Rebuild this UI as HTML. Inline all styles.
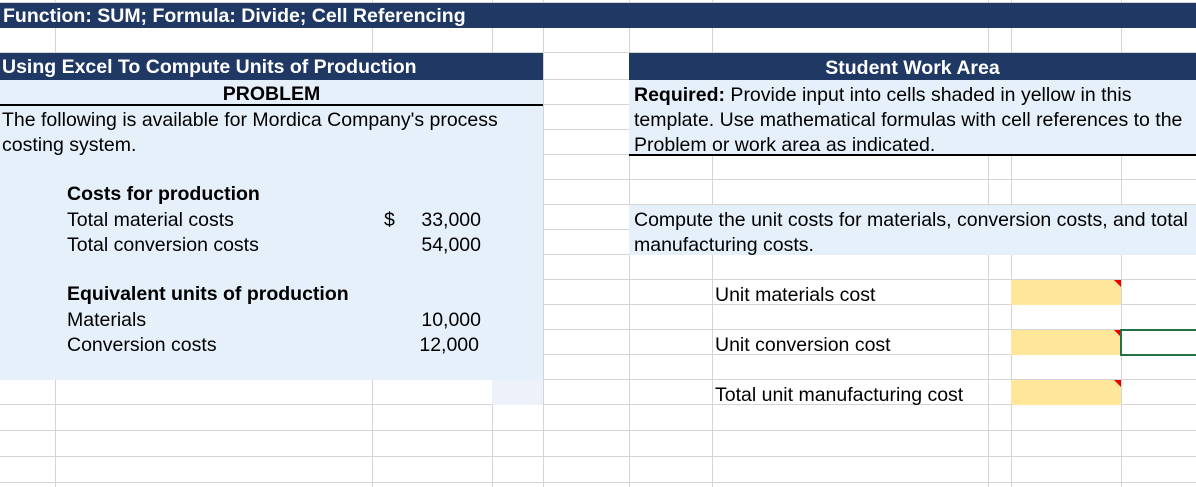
<!DOCTYPE html>
<html><head><style>
html,body{margin:0;padding:0}
body{width:1196px;height:487px;position:relative;overflow:hidden;background:#fff;font-family:"Liberation Sans",Arial,sans-serif;font-size:19.5px;color:#000}
.a{position:absolute;box-sizing:border-box}
.v{position:absolute;top:0;height:487px;width:1px;background:#d4d4d4}
.h{position:absolute;left:0;width:1196px;height:1px;background:#d4d4d4}
.dk{background:#203864;color:#fff;font-weight:bold}
.lb{background:#e6f0fa}
.t{position:absolute;white-space:nowrap;line-height:25px;margin-top:2px}
.y{background:#ffe699}
.tri{position:absolute;right:0;top:0;width:0;height:0;border-top:7px solid #e00;border-left:7px solid transparent}
</style></head><body>
<div class="v" style="left:55px"></div><div class="v" style="left:372px"></div><div class="v" style="left:492px"></div><div class="v" style="left:543px"></div><div class="v" style="left:629px"></div><div class="v" style="left:712px"></div><div class="v" style="left:988px"></div><div class="v" style="left:1011px"></div><div class="v" style="left:1121px"></div>
<div class="h" style="top:2px"></div><div class="h" style="top:52px"></div><div class="h" style="top:79px"></div><div class="h" style="top:104px"></div><div class="h" style="top:129px"></div><div class="h" style="top:154px"></div><div class="h" style="top:179px"></div><div class="h" style="top:204px"></div><div class="h" style="top:229px"></div><div class="h" style="top:254px"></div><div class="h" style="top:279px"></div><div class="h" style="top:304px"></div><div class="h" style="top:329px"></div><div class="h" style="top:354px"></div><div class="h" style="top:379px"></div><div class="h" style="top:404px"></div><div class="h" style="top:430px"></div><div class="h" style="top:456px"></div><div class="h" style="top:482px"></div>

<div class="a dk" style="left:0;top:3px;width:1196px;height:25px;padding-left:3px;line-height:26px">Function: SUM; Formula: Divide; Cell Referencing</div>

<div class="a dk" style="left:0;top:53px;width:543px;height:27px;padding-left:2px;line-height:29px">Using Excel To Compute Units of Production</div>
<div class="a lb" style="left:0;top:80px;width:543px;height:300px"></div>
<div class="a" style="left:0;top:104px;width:543px;height:2px;background:#000"></div>
<div class="t" style="left:0;top:80px;width:543px;text-align:center;font-weight:bold">PROBLEM</div>
<div class="t" style="left:2px;top:106px">The following is available for Mordica Company's process</div>
<div class="t" style="left:2px;top:131px">costing system.</div>
<div class="t" style="left:67px;top:180px;font-weight:bold">Costs for production</div>
<div class="t" style="left:67px;top:206px">Total material costs</div>
<div class="t" style="left:384px;top:206px">$</div>
<div class="t" style="left:372px;top:206px;width:109px;text-align:right">33,000</div>
<div class="t" style="left:67px;top:231px">Total conversion costs</div>
<div class="t" style="left:372px;top:231px;width:109px;text-align:right">54,000</div>
<div class="t" style="left:67px;top:280px;font-weight:bold">Equivalent units of production</div>
<div class="t" style="left:67px;top:306px">Materials</div>
<div class="t" style="left:372px;top:306px;width:109px;text-align:right">10,000</div>
<div class="t" style="left:67px;top:331px">Conversion costs</div>
<div class="t" style="left:372px;top:331px;width:107px;text-align:right">12,000</div>
<div class="a" style="left:492px;top:380px;width:51px;height:25px;background:#edf1fa"></div>

<div class="a dk" style="left:629px;top:53px;width:567px;height:27px;text-align:center;line-height:30px">Student Work Area</div>
<div class="a lb" style="left:629px;top:80px;width:567px;height:75px"></div>
<div class="a" style="left:629px;top:154px;width:567px;height:2px;background:#000"></div>
<div class="t" style="left:634px;top:81px"><b>Required:</b> Provide input into cells shaded in yellow in this</div>
<div class="t" style="left:634px;top:106px">template. Use mathematical formulas with cell references to the</div>
<div class="t" style="left:634px;top:131px">Problem or work area as indicated.</div>
<div class="a lb" style="left:629px;top:205px;width:567px;height:50px"></div>
<div class="t" style="left:634px;top:206px">Compute the unit costs for materials, conversion costs, and total</div>
<div class="t" style="left:634px;top:231px">manufacturing costs.</div>
<div class="t" style="left:715px;top:281px">Unit materials cost</div>
<div class="t" style="left:715px;top:331px">Unit conversion cost</div>
<div class="t" style="left:715px;top:381px">Total unit manufacturing cost</div>
<div class="a y" style="left:1011px;top:280px;width:110px;height:25px"><div class="tri"></div></div>
<div class="a y" style="left:1011px;top:330px;width:110px;height:25px"><div class="tri"></div></div>
<div class="a y" style="left:1011px;top:380px;width:110px;height:25px"><div class="tri"></div></div>
<div class="a" style="left:1120px;top:329px;width:80px;height:27px;border:2px solid #217346;background:#fff"></div>
</body></html>
